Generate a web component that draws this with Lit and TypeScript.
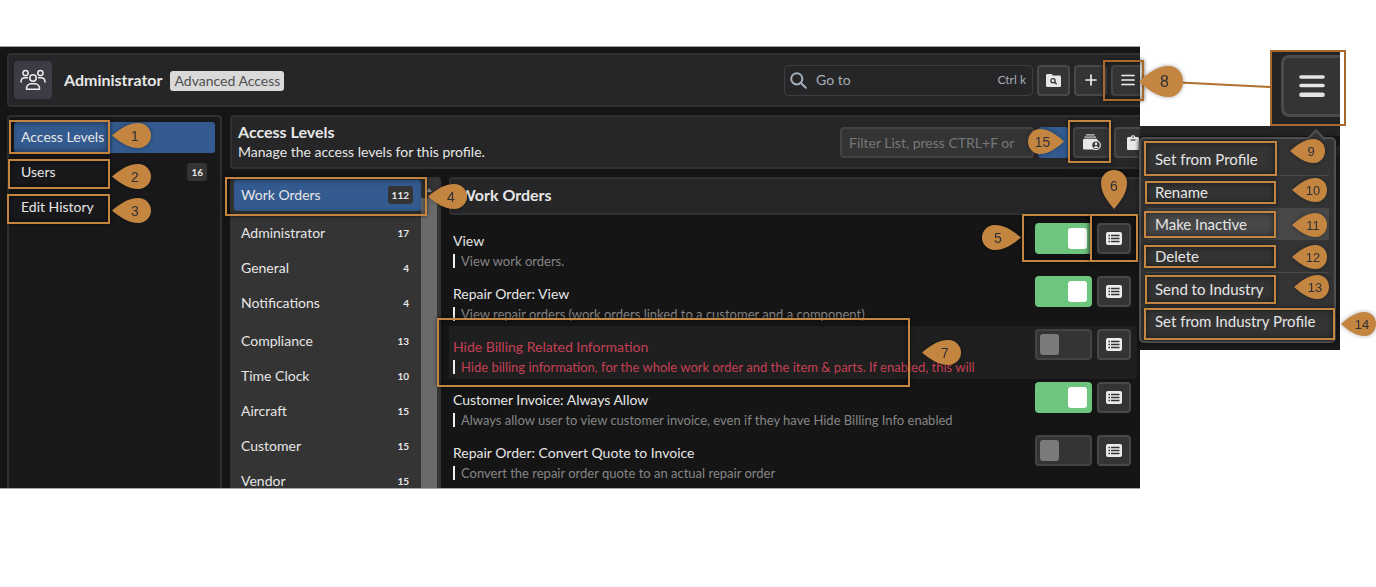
import { LitElement, html, css, svg, nothing } from "lit";
import { customElement, property } from "lit/decorators.js";
import { classMap } from "lit/directives/class-map.js";
import { styleMap } from "lit/directives/style-map.js";

interface NavEntry { label: string; count?: number; active?: boolean }
interface Permission { title: string; text: string; on: boolean; danger?: boolean }
interface Mark { x: number; y: number; w: number; h: number; deep?: boolean }
interface Pin { n: number; x: number; y: number; size?: string; dir?: string }

const NAV: NavEntry[] = [
  { label: "Access Levels", active: true },
  { label: "Users", count: 16 },
  { label: "Edit History" },
];

const CATEGORIES: NavEntry[][] = [
  [{ label: "Work Orders", count: 112, active: true }],
  [
    { label: "Administrator", count: 17 },
    { label: "General", count: 4 },
    { label: "Notifications", count: 4 },
  ],
  [
    { label: "Compliance", count: 13 },
    { label: "Time Clock", count: 10 },
    { label: "Aircraft", count: 15 },
    { label: "Customer", count: 15 },
    { label: "Vendor", count: 15 },
  ],
];

const PERMISSIONS: Permission[] = [
  { title: "View", text: "View work orders.", on: true },
  { title: "Repair Order: View", text: "View repair orders (work orders linked to a customer and a component)", on: true },
  { title: "Hide Billing Related Information", text: "Hide billing information, for the whole work order and the item & parts. If enabled, this will", on: false, danger: true },
  { title: "Customer Invoice: Always Allow", text: "Always allow user to view customer invoice, even if they have Hide Billing Info enabled", on: true },
  { title: "Repair Order: Convert Quote to Invoice", text: "Convert the repair order quote to an actual repair order", on: false },
];

const MARKS: Mark[] = [
  { x: 9, y: 120, w: 101, h: 34 },
  { x: 8, y: 159, w: 102, h: 30 },
  { x: 7, y: 194, w: 103, h: 30 },
  { x: 225, y: 177, w: 202, h: 39 },
  { x: 1022, y: 214, w: 70, h: 48 },
  { x: 1090, y: 214, w: 48, h: 48 },
  { x: 437, y: 318, w: 473, h: 69 },
  { x: 1103, y: 60, w: 41, h: 41, deep: true },
  { x: 1068, y: 120, w: 43, h: 43 },
  { x: 1144, y: 141, w: 133, h: 35 },
  { x: 1145, y: 181, w: 131, h: 23 },
  { x: 1144, y: 211, w: 132, h: 27 },
  { x: 1144, y: 245, w: 132, h: 23 },
  { x: 1145, y: 275, w: 131, h: 29 },
  { x: 1144, y: 308, w: 191, h: 32 },
];

const PINS: Pin[] = [
  { n: 1, x: 112, y: 123 },
  { n: 2, x: 112, y: 164 },
  { n: 3, x: 112, y: 198 },
  { n: 4, x: 428, y: 184 },
  { n: 5, x: 982, y: 225, dir: "right" },
  { n: 6, x: 1101, y: 170, dir: "down" },
  { n: 7, x: 922, y: 340 },
  { n: 8, x: 1139, y: 66, size: "large" },
  { n: 9, x: 1290, y: 139, size: "small" },
  { n: 10, x: 1292, y: 178, size: "small" },
  { n: 11, x: 1292, y: 213, size: "small" },
  { n: 12, x: 1292, y: 245, size: "small" },
  { n: 13, x: 1294, y: 275, size: "small" },
  { n: 14, x: 1341, y: 312, size: "small" },
  { n: 15, x: 1028, y: 129, size: "small", dir: "right" },
];

const users = svg`<svg width="26" height="22" viewBox="0 0 26 22" fill="none" stroke="#ececee" stroke-width="1.5" stroke-linecap="round">
  <circle cx="5.6" cy="4" r="2.6"/><circle cx="20.4" cy="4" r="2.6"/><circle cx="13" cy="9" r="3.2"/>
  <path d="M1 13c0-2.600 1.500-4.200 4-4.200h2.500M25 13c0-2.600-1.500-4.200-4-4.200h-2.500"/>
  <path d="M6.500 20.200c-.4-3.600 2-5.400 4.500-5.400h4c2.500 0 4.900 1.800 4.500 5.400z" stroke-linejoin="round"/></svg>`;
const magnifier = svg`<svg width="17" height="17" viewBox="0 0 17 17" fill="none" stroke="#a3adba" stroke-width="2" stroke-linecap="round"><circle cx="6.800" cy="6.800" r="5.600"/><path d="M11 11l4.800 4.800"/></svg>`;
const folderSearch = svg`<svg width="15" height="13" viewBox="0 0 15 13"><path fill="#e6e6e6" d="M1.500 0h4l1.500 1.600h6.500c.9 0 1.500.6 1.500 1.500v8.400c0 .9-.6 1.500-1.500 1.500h-12C.6 13 0 12.400 0 11.500v-10C0 .6.600 0 1.500 0z"/><circle cx="7" cy="6.700" r="2.100" fill="none" stroke="#333" stroke-width="1.300"/><path d="M8.600 8.300l2 2" stroke="#333" stroke-width="1.400"/></svg>`;
const plus = svg`<svg width="12" height="12" viewBox="0 0 12 12" stroke="#eee" stroke-width="1.700" stroke-linecap="round"><path d="M6 1v10M1 6h10"/></svg>`;
const bars = svg`<svg width="14" height="12" viewBox="0 0 14 12" stroke="#eee" stroke-width="1.700" stroke-linecap="round"><path d="M1 1.500h12M1 6h12M1 10.500h12"/></svg>`;
const bigBars = svg`<svg width="26" height="24" viewBox="0 0 26 24" stroke="#e4e4e4" stroke-linecap="round"><path stroke-width="3.600" d="M2 3h22M2 11.500h22"/><path stroke-width="4.400" d="M2.400 20.800h21.200"/></svg>`;
const listCard = svg`<svg width="16" height="13" viewBox="0 0 16 13"><rect width="16" height="13" rx="2" fill="#ececec"/><path stroke="#333" stroke-width="1.300" d="M2.500 3.500h1.500M5 3.500h8.500M2.500 6.500h1.500M5 6.500h8.500M2.500 9.500h1.500M5 9.500h8.500"/></svg>`;
const stackUser = svg`<svg width="18" height="16" viewBox="0 0 18 16"><path stroke="#c8c8c8" stroke-width="1.300" d="M3 .8h8.500M1.500 3.200h11.500"/><path fill="#e8e8e8" d="M1.500 4.800h11.500c.8 0 1.500.7 1.500 1.500v8.200c0 .8-.7 1-1.500 1H1.500C.7 15.500 0 15 0 14.200V6.300c0-.8.700-1.500 1.500-1.500z"/><circle cx="13" cy="11.200" r="4.300" fill="#333" stroke="#e8e8e8" stroke-width="1.200"/><circle cx="13" cy="9.900" r="1.300" fill="#e8e8e8"/><path fill="#e8e8e8" d="M10.600 13.600c.5-1.700 4.300-1.700 4.800 0-1.200 1-3.600 1-4.800 0z"/></svg>`;
const clipboard = svg`<svg width="12" height="15" viewBox="0 0 12 15"><path fill="#e8e8e8" d="M1.500 2h2.300C4-.2 8-.2 8.200 2h2.300c.8 0 1.500.6 1.500 1.400v10c0 .9-.7 1.600-1.500 1.600h-9C.7 15 0 14.300 0 13.400v-10C0 2.600.700 2 1.500 2z"/><circle cx="6" cy="2.100" r=".8" fill="#333"/><path stroke="#333" stroke-width="1.200" d="M3.500 5h5"/></svg>`;
const filterGlyph = svg`<svg width="14" height="13" viewBox="0 0 14 13" fill="#e8e8e8"><path d="M0 0h10L7 6v7L4 10V6z"/></svg>`;

@customElement("callout-pin")
export class CalloutPin extends LitElement {
  @property() size = "medium";
  @property() dir = "left";

  static styles = css`
    :host { display: block; }
    .pin { display: grid; width: 39px; height: 25px; filter: drop-shadow(0 0 2px rgba(0, 0, 0, .35)); }
    .pin > * { grid-area: 1 / 1; }
    .shape { width: 100%; height: 100%; display: block; fill: #c38540; }
    .number { z-index: 1; display: grid; place-items: center; padding-left: 7px; font: 14px "Liberation Sans", Arial, sans-serif; color: #2e3136; }
    .small { width: 35px; height: 24px; }
    .small .number { font-size: 13px; padding-left: 7px; }
    .large { width: 44px; height: 31px; }
    .large .number { font-size: 16px; }
    .right .shape { transform: scaleX(-1); }
    .right .number { padding: 0 7px 0 0; }
    .small.right { width: 36px; height: 25px; }
    .small.right .number { font-size: 14px; padding: 0 7px 0 0; }
    .down { width: 26px; height: 39px; }
    .down .number { padding: 0 0 7px; }
  `;

  render() {
    const down = this.dir === "down";
    return html`<div class=${classMap({ pin: true, [this.size]: true, [this.dir]: true })}>
      ${down
        ? html`<svg class="shape" viewBox="0 0 25 39" preserveAspectRatio="none"><path d="M12.500 39C6 31 0 23 0 12.500a12.500 12.500 0 0 1 25 0C25 23 19 31 12.500 39z"/></svg>`
        : html`<svg class="shape" viewBox="0 0 39 25" preserveAspectRatio="none"><path d="M0 12.500C8 6 16 0 26.500 0a12.500 12.500 0 0 1 0 25C16 25 8 19 0 12.500z"/></svg>`}
      <span class="number"><slot></slot></span>
    </div>`;
  }
}

@customElement("app-root")
export class AppRoot extends LitElement {
  static styles = css`
    * { box-sizing: border-box; }
    :host {
      display: flex; position: relative; box-sizing: border-box; height: 100vh; padding: 46px 0 98px;
      overflow: hidden; background: #fff; color: #e6e6e6; font: 14px/20px Lato, "Open Sans", sans-serif;
    }
    h1, h2, h3, p, ul { margin: 0; padding: 0; }
    ul { list-style: none; }
    button, input { font: inherit; color: inherit; margin: 0; }
    a { color: inherit; text-decoration: none; }
    svg { display: block; flex: none; }

    .app { flex: 1; min-width: 0; overflow: hidden; background: #151515; border: solid #a5a5a5; border-width: 1px 0; }
    .frame { display: grid; grid-template: auto 1fr / 215px 1fr; gap: 8px; height: 100%; margin-right: -20px; padding: 6px 0 0 7px; }
    .panel { border: 2px solid #303032; border-radius: 4px; background: #262628; }

    .topbar { grid-column: 1 / -1; display: flex; align-items: center; gap: 4px; height: 54px; padding: 0 14px 0 5px; }
    .avatar { display: grid; place-items: center; width: 38px; height: 38px; border-radius: 4px; background: #3c3c44; }
    .name { margin-left: 8px; font-size: 16px; font-weight: 700; }
    .tier { margin: 2px auto 0 4px; padding: 0 4px; border-radius: 3px; background: #d9d9d9; color: #505050; }
    .goto { display: flex; align-items: center; gap: 9px; width: 249px; height: 31px; padding: 0 6px 0 5px; border: 1px solid #3e3e40; border-radius: 4px; color: #a8adb4; }
    .goto input { flex: 1; min-width: 0; padding: 0; border: 0; outline: 0; background: none; }
    .goto input::placeholder { color: #a8adb4; opacity: 1; }
    kbd { font: 12px/20px Lato, sans-serif; }
    .btn { display: grid; place-items: center; flex: none; width: 33px; height: 31px; padding: 0; border: 2px solid #48484a; border-radius: 4px; background: #343434; }
    .wide { width: 37px; }
    .blue { width: 31px; border-color: #335b8f; background: #335b8f; }

    .side { padding: 5px; background: #19191c; border-bottom: 0; border-radius: 4px 4px 0 0; }
    .side ul { display: grid; gap: 4px; }
    .entry { display: flex; align-items: center; justify-content: space-between; height: 31px; padding: 0 8px 2px 7px; border-radius: 3px; }
    .entry.active { background: #335b8f; }
    .count { padding: 0 4px; border-radius: 3px; font-size: 10px; line-height: 18px; font-weight: 700; background: #343434; }

    .main { display: grid; grid-template: auto 1fr / 211px 1fr; gap: 8px; min-height: 0; }
    .intro { grid-column: 1 / -1; display: flex; align-items: center; gap: 4px; height: 54px; padding: 0 7px 0 6px; }
    .intro-text { margin-right: auto; line-height: 20px; }
    h2, h3 { font-size: 16px; font-weight: 700; }
    .filter { width: 194px; height: 31px; padding: 0 7px; border: 2px solid #434345; border-radius: 4px; outline: 0; background: #343434; }
    .filter::placeholder { color: #77777a; opacity: 1; }
    .categories { display: flex; min-height: 0; overflow: hidden; padding: 3px 4px 0; border-radius: 4px 4px 0 0; background: #343434; }
    .groups { flex: 1; display: grid; align-content: start; gap: 7px; }
    .groups ul { display: grid; gap: 4px; }
    .track { width: 16px; margin-top: 4px; padding-top: 4px; }
    .arrow { display: block; margin: 0 auto 6px; }
    .thumb { height: 100%; background: #6a6a6a; }

    .rules { min-width: 0; overflow: hidden; }
    .rules-title { height: 38px; padding: 6px 8px; }
    .rules ul { padding-top: 5px; }
    .rule { display: flex; gap: 5px; height: 53px; margin-right: 23px; padding: 3px 6px 0 4px; }
    .rule-text { flex: 1; min-width: 0; padding-top: 8px; }
    .rule-note { display: flex; align-items: center; gap: 6px; white-space: nowrap; font-size: 13px; color: #858585; }
    .rule-note::before { content: ""; width: 2px; height: 14px; background: #eee; }
    .danger { background: #1f1f1f; }
    .danger .rule-title, .danger .rule-note { color: #c54055; }
    .toggle { appearance: none; flex: none; width: 57px; height: 31px; padding: 3px; border: 2px solid #434345; border-radius: 4px; background: #343434; }
    .toggle::before { content: ""; display: block; width: 19px; height: 21px; border-radius: 3px; background: #7b7b7b; }
    .toggle:checked { border-color: #6ec57e; background: #6ec57e; }
    .toggle:checked::before { margin-left: auto; background: #fff; }
    .rule .btn { width: 34px; }

    .aside { flex: none; width: 236px; padding: 4px 31px 0 0; }
    .closeup { display: flex; width: 76px; height: 76px; margin: 0 0 0 130px; padding: 3px 3px 3px 9px; border: 2px solid #a9682c; background: linear-gradient(90deg, #242426 68px, #fff 68px); }
    .closeup button { display: grid; place-items: center; width: 59px; height: 62px; padding: 0; border: solid #4b4b4d; border-width: 3px 0 3px 3px; border-radius: 8px 0 0 8px; background: #343434; }
    .sheet { width: 200px; height: 224px; background: linear-gradient(#242426 10px, #151515 10px 20px, #242426 20px 30px, #1a1a1c 30px); }
    .menu { position: absolute; top: 137px; right: 40px; width: 197px; padding: 4px 5px; border: 2px solid #505052; border-radius: 5px; background: #343434; box-shadow: 0 0 4px #111; }
    .menu::before { content: ""; position: absolute; top: -7px; right: 11px; width: 12px; height: 12px; border: solid #505052; border-width: 2px 0 0 2px; background: #343434; transform: rotate(45deg); }
    .menu li { border-bottom: 0 solid #4b4b4d; }
    .menu .ruled { border-bottom-width: 1px; }
    .menu button { display: block; width: 100%; height: 32px; padding: 0 9px; border: 0; border-radius: 3px; background: none; font-size: 15px; text-align: left; white-space: nowrap; }
    .menu .hover { background: #484848; }

    .overlay { position: absolute; inset: 0; pointer-events: none; }
    .mark { position: absolute; border: 2px solid #c38540; box-shadow: 0 0 4px rgba(0, 0, 0, .6), inset 0 0 6px rgba(0, 0, 0, .55); }
    .deep { border-color: #a9682c; }
    .spot { position: absolute; }
    .lead { position: absolute; inset: 0; width: 100%; height: 100%; }
  `;

  private entry(e: NavEntry) {
    return html`<li><a class=${classMap({ entry: true, active: !!e.active })} href="#">
      <span>${e.label}</span>${e.count === undefined ? nothing : html`<span class="count">${e.count}</span>`}
    </a></li>`;
  }

  private rule(p: Permission, i: number) {
    return html`<li class=${classMap({ rule: true, danger: !!p.danger })}>
      <div class="rule-text">
        <label class="rule-title" for="rule-${i}">${p.title}</label>
        <p class="rule-note">${p.text}</p>
      </div>
      <input class="toggle" type="checkbox" role="switch" id="rule-${i}" .checked=${p.on} />
      <button class="btn" aria-label="Details">${listCard}</button>
    </li>`;
  }

  private menuItem(label: string, extra = "", hover = false) {
    return html`<li class=${extra}><button class=${hover ? "hover" : ""}>${label}</button></li>`;
  }

  render() {
    return html`
      <div class="app"><div class="frame">
        <header class="topbar panel">
          <span class="avatar">${users}</span>
          <h1 class="name">Administrator</h1>
          <span class="tier">Advanced Access</span>
          <label class="goto">${magnifier}<input type="text" placeholder="Go to" aria-label="Go to" /><kbd>Ctrl k</kbd></label>
          <button class="btn" aria-label="Browse">${folderSearch}</button>
          <button class="btn" aria-label="Add">${plus}</button>
          <button class="btn" aria-label="Menu">${bars}</button>
        </header>
        <nav class="side panel"><ul>${NAV.map((e) => this.entry(e))}</ul></nav>
        <main class="main">
          <section class="intro panel">
            <div class="intro-text"><h2>Access Levels</h2><p>Manage the access levels for this profile.</p></div>
            <input class="filter" type="text" aria-label="Filter list" placeholder="Filter List, press CTRL+F or" />
            <button class="btn blue" aria-label="Filter">${filterGlyph}</button>
            <button class="btn wide" aria-label="Profiles">${stackUser}</button>
            <button class="btn wide" aria-label="Copy">${clipboard}</button>
          </section>
          <nav class="categories">
            <div class="groups">${CATEGORIES.map((g) => html`<ul>${g.map((e) => this.entry(e))}</ul>`)}</div>
            <div class="track"><svg class="arrow" width="6" height="4" viewBox="0 0 6 4"><path fill="#8a8a8a" d="M0 4l3-4 3 4z"/></svg><div class="thumb"></div></div>
          </nav>
          <section class="rules">
            <h3 class="rules-title panel">Work Orders</h3>
            <ul>${PERMISSIONS.map((p, i) => this.rule(p, i))}</ul>
          </section>
        </main>
      </div></div>
      <div class="aside">
        <div class="closeup"><button aria-label="Menu">${bigBars}</button></div>
        <div class="sheet"></div>
      </div>
      <ul class="menu">
        ${this.menuItem("Set from Profile", "ruled")}
        ${this.menuItem("Rename")}
        ${this.menuItem("Make Inactive", "", true)}
        ${this.menuItem("Delete", "ruled")}
        ${this.menuItem("Send to Industry")}
        ${this.menuItem("Set from Industry Profile")}
      </ul>
      <div class="overlay">
        <svg class="lead"><path d="M1180 82.500L1270 87" stroke="#b06f2c" stroke-width="2"/></svg>
        ${MARKS.map((m) => html`<div class=${classMap({ mark: true, deep: !!m.deep })}
          style=${styleMap({ left: `${m.x}px`, top: `${m.y}px`, width: `${m.w}px`, height: `${m.h}px` })}></div>`)}
        ${PINS.map((p) => html`<callout-pin class="spot" size=${p.size ?? "medium"} dir=${p.dir ?? "left"}
          style=${styleMap({ left: `${p.x}px`, top: `${p.y}px` })}>${p.n}</callout-pin>`)}
      </div>`;
  }
}
